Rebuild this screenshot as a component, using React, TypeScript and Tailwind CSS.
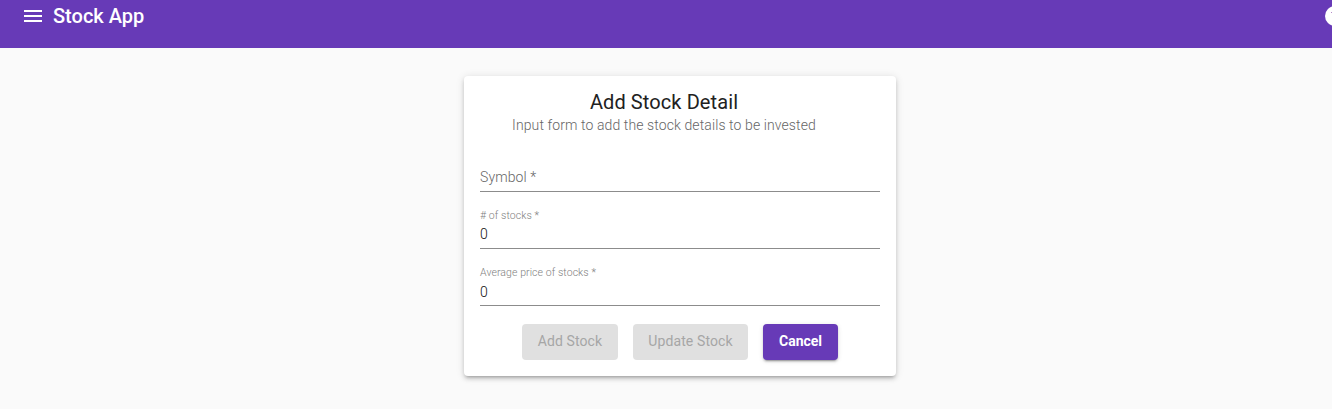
const roboto = { fontFamily: 'Roboto, sans-serif' };

function Field({ label, value, valueGap = 'mt-[2px]' }: { label: string; value?: string; valueGap?: string }) {
  // Empty field shows its label inside the input line, filled ones float it above
  if (!value) {
    return (
      <div className="h-[38px] flex items-end border-b border-[#8c8c8c] pb-[4px]">
        <span className="text-[14px] leading-[20px] font-light tracking-[0.1px] text-[#666]">{label}</span>
      </div>
    );
  }
  return (
    <div className="h-[49px] flex flex-col border-b border-[#8c8c8c] pt-[9px]">
      <span className="text-[10.5px] leading-[14px] font-light tracking-[0.08px] text-[#808080]">{label}</span>
      <span className={`${valueGap} text-[14px] leading-[19.5px] font-light tracking-[0.1px] text-[#111]`}>{value}</span>
    </div>
  );
}

export default function App() {
  return (
    <div className="h-[409px] overflow-hidden bg-[#fafafa]" style={roboto}>
      <header className="h-[48px] bg-[#673ab7] flex items-start overflow-hidden pl-[21px] text-white">
        <svg className="mt-[4px] w-[24px] h-[24px] shrink-0" viewBox="0 0 24 24" fill="currentColor">
          <path d="M3 18h18v-2H3v2zm0-5h18v-2H3v2zm0-7v2h18V6H3z" />
        </svg>
        <span className="ml-[8px] text-[20px] leading-[32px] font-medium">Stock App</span>
        <svg className="ml-auto mt-[4px] mr-[-15px] w-[24px] h-[24px] shrink-0" viewBox="0 0 24 24">
          <circle cx="12" cy="12" r="10" fill="#fff" />
          <rect x="8" y="8" width="1" height="1" fill="#b58ac9" />
        </svg>
      </header>

      <main className="flex justify-center pt-[28px] pl-[28px]">
        <div className="w-[432px] h-[300px] bg-white rounded-[4px] px-[16px] shadow-[0_3px_3px_-2px_rgba(0,0,0,0.2),0_3px_4px_0_rgba(0,0,0,0.14),0_1px_8px_0_rgba(0,0,0,0.12)]">
          <div className="pr-[32px]">
            <h1 className="pt-[12px] text-center text-[20px] leading-[28px] font-normal tracking-[0.1px] text-[#212121]">Add Stock Detail</h1>
            <p className="text-center text-[14px] leading-[18px] font-light tracking-[0.1px] text-[#666]">
              Input form to add the stock details to be invested
            </p>
          </div>

          <div className="mt-[20px] flex flex-col gap-[8px]">
            <Field label="Symbol *" />
            <Field label="# of stocks *" value="0" />
            <Field label="Average price of stocks *" value="0" valueGap="mt-[3px]" />
          </div>

          <div className="mt-[18px] flex justify-center gap-[15px]">
            <button className="w-[96px] h-[36px] pb-[1px] rounded-[4px] bg-[#e0e0e0] text-[14px] font-normal tracking-[0.1px] text-[#a6a6a6]">Add Stock</button>
            <button className="w-[115px] h-[36px] pb-[1px] rounded-[4px] bg-[#e0e0e0] text-[14px] font-normal tracking-[0.1px] text-[#a6a6a6]">Update Stock</button>
            <button className="w-[75px] h-[36px] pb-[1px] rounded-[4px] bg-[#673ab7] text-[14px] font-bold tracking-[-0.02px] text-white shadow-[0_3px_1px_-2px_rgba(0,0,0,0.2),0_2px_2px_0_rgba(0,0,0,0.14),0_1px_5px_0_rgba(0,0,0,0.12)]">Cancel</button>
          </div>
        </div>
      </main>
    </div>
  );
}
